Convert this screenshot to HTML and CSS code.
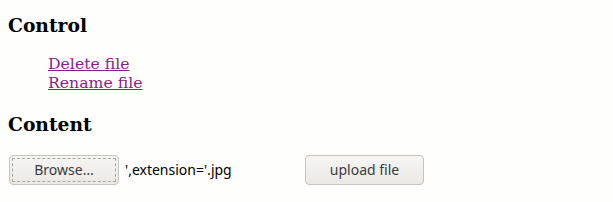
FILE: index.html
```html
<!DOCTYPE html>
<html>
<head>
<meta charset="utf-8">
<title>File</title>
<link rel="stylesheet" href="styles.css">
</head>
<body>
<h3 class="heading heading-first">Control</h3>
<ul class="actions">
  <li><a class="action-link" href="#">Delete file</a></li>
  <li><a class="action-link" href="#">Rename file</a></li>
</ul>
<h3 class="heading heading-content">Content</h3>
<form class="upload-form">
  <div class="file-field">
    <button type="button" class="btn btn-browse"><span class="focus-ring">Browse…</span></button>
    <span class="file-name">',extension='.jpg</span>
  </div>
  <button type="button" class="btn btn-upload">upload file</button>
</form>
</body>
</html>
```
FILE: styles.css
```css
html { background: #fefefc; }
body {
  margin: 0;
  padding: 0 8px 8px 8px;
  background: #fefefc;
  color: #000;
  font-family: "DejaVu Serif", serif;
}
.heading {
  font-family: "DejaVu Serif", serif;
  font-weight: bold;
  font-size: 18.72px;
  margin: 18.72px 0;
}
.heading-first { margin-top: 13.6px; }
.heading-content { margin-bottom: 19.7px; }
.actions {
  list-style: none;
  margin: 18.72px 0 20.7px 0;
  padding-left: 40px;
  font-size: 15.7px;
}
.action-link {
  color: #8d1a8d;
  text-decoration: underline;
}
.upload-form {
  display: flex;
  align-items: center;
  margin: 0;
}
.file-field {
  display: flex;
  align-items: center;
  width: 297px;
}
.btn {
  font-family: "Noto Sans", "DejaVu Sans", sans-serif;
  font-size: 14px;
  color: #3c3c3c;
  height: 30px;
  border: 1px solid #c8c4bd;
  border-radius: 4px;
  background: linear-gradient(#f6f5f3, #ebe9e6);
  padding: 0;
  margin: 0;
  display: flex;
  align-items: center;
  justify-content: center;
}
.btn-browse {
  width: 110px;
  margin-left: 1px;
  padding: 2px;
}
.focus-ring {
  flex: 1;
  align-self: stretch;
  display: flex;
  align-items: center;
  justify-content: center;
  border: 1px dashed #a9a6a0;
  border-radius: 1px;
}
.file-name {
  font-family: "Noto Sans", "DejaVu Sans", sans-serif;
  font-size: 14px;
  color: #000;
  margin-left: 6px;
}
.btn-upload {
  width: 119px;
}
```
